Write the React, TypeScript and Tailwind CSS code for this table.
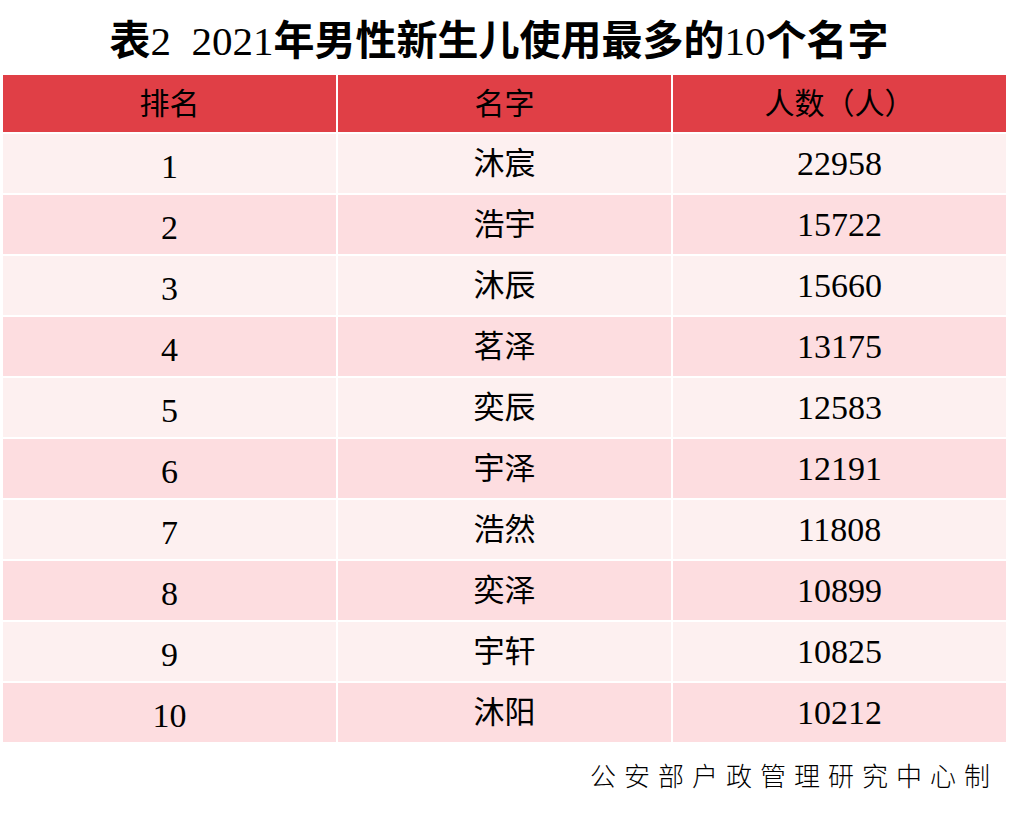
const rows = [
  { rank: 1, name: "沐宸", count: 22958 },
  { rank: 2, name: "浩宇", count: 15722 },
  { rank: 3, name: "沐辰", count: 15660 },
  { rank: 4, name: "茗泽", count: 13175 },
  { rank: 5, name: "奕辰", count: 12583 },
  { rank: 6, name: "宇泽", count: 12191 },
  { rank: 7, name: "浩然", count: 11808 },
  { rank: 8, name: "奕泽", count: 10899 },
  { rank: 9, name: "宇轩", count: 10825 },
  { rank: 10, name: "沐阳", count: 10212 },
]

const headers = ["排名", "名字", "人数（人）"]

export default function App() {
  return (
    <div className="w-[1012px] h-[815px] bg-white text-black font-['Liberation_Serif','Noto_Sans_CJK_SC',serif]">
      <h1 className="h-[75px] pt-[8px] pr-[14px] flex items-center justify-center whitespace-pre text-[41px] leading-none font-bold">
        表<span className="font-normal">2  2021</span>年男性新生儿使用最多的<span className="font-normal">10</span>个名字
      </h1>

      <div className="mx-[3px] w-[1003px] flex flex-col gap-[2px]">
        <div className="grid grid-cols-3 gap-[2px] h-[57px]">
          {headers.map((h) => (
            <div
              key={h}
              className="bg-[#e03f46] flex items-center justify-center text-[30px] leading-none"
            >
              {h}
            </div>
          ))}
        </div>

        {rows.map((r, i) => {
          const bg = i % 2 === 0 ? "bg-[#fdf0f0]" : "bg-[#fddde0]"
          return (
            <div key={r.rank} className="grid grid-cols-3 gap-[2px] h-[59px]">
              <div className={`${bg} flex items-center justify-center pt-[6px] text-[34px] leading-none`}>
                {r.rank}
              </div>
              <div className={`${bg} flex items-center justify-center text-[31px] leading-none`}>
                {r.name}
              </div>
              <div className={`${bg} flex items-center justify-center pt-[1px] text-[34px] leading-none`}>
                {r.count}
              </div>
            </div>
          )
        })}
      </div>

      <div className="flex justify-end pr-[14px] pt-[23px]">
        <span className="text-[26px] leading-none tracking-[8px] font-light">
          公安部户政管理研究中心制
        </span>
      </div>
    </div>
  )
}
